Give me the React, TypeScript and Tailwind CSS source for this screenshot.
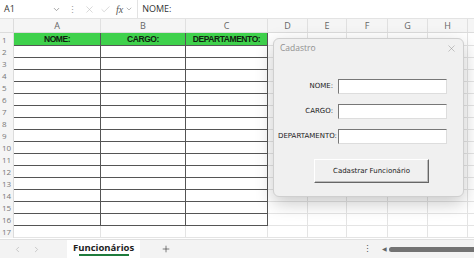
import { ChevronDown, X, Check, ChevronLeft, ChevronRight, Plus } from 'lucide-react';

const cols = [
  { label: 'A', w: 'w-[87px]' },
  { label: 'B', w: 'w-[85px]' },
  { label: 'C', w: 'w-[82px]' },
  { label: 'D', w: 'w-[40px]' },
  { label: 'E', w: 'w-[39px]' },
  { label: 'F', w: 'w-[41px]' },
  { label: 'G', w: 'w-[40px]' },
  { label: 'H', w: 'w-[40px]' },
];

const headers = ['NOME:', 'CARGO:', 'DEPARTAMENTO:'];
const rows = Array.from({ length: 17 }, (_, i) => i + 1);

function Field({ label }: { label: string }) {
  return (
    <div className="flex items-center h-[15px]">
      <span className="w-[60px] text-right pr-[5px] text-[7px] text-[#222]">{label}</span>
      <div className="w-[109px] h-[15px] bg-white border-t-[1.5px] border-l-[1.5px] border-t-[#777] border-l-[#777] border-b border-r border-b-[#ddd] border-r-[#ddd]" />
    </div>
  );
}

export default function App() {
  return (
    <div className="w-[474px] h-[258px] overflow-hidden bg-white relative font-['Open_Sans',sans-serif] text-[#333]">
      {/* Formula bar */}
      <div className="h-[19px] flex items-center border-b border-[#e3e3e3] text-[9px]">
        <div className="w-[64px] h-full flex items-center justify-between pl-[4px] pr-[3px]">
          <span>A1</span>
          <ChevronDown size={9} className="text-[#888]" />
        </div>
        <span className="ml-[4px] w-[8px] text-[#999] text-[9px] leading-none">⋮</span>
        <div className="flex items-center gap-[5px] text-[#bbb] ml-[8px]">
          <X size={11} strokeWidth={1.2} />
          <Check size={11} strokeWidth={1.2} />
        </div>
        <span className="ml-[5px] font-['Liberation_Serif',serif] italic text-[10px] text-[#555]">fx</span>
        <ChevronDown size={8} className="text-[#999] ml-[2px]" />
        <div className="h-full border-l border-[#e3e3e3] ml-[4px] pl-[4px] flex items-center text-[9px]">NOME:</div>
      </div>

      {/* Column headers */}
      <div className="flex h-[14px] bg-[#f5f5f5] border-b border-[#dcdcdc] text-[9px] text-[#666]">
        <div className="w-[14px] border-r border-[#dcdcdc]" />
        {cols.map((c) => (
          <div key={c.label} className={`${c.w} shrink-0 flex items-center justify-center border-r border-[#e0e0e0]`}>
            {c.label}
          </div>
        ))}
        <div className="flex-1" />
      </div>

      {/* Grid */}
      <div className="flex flex-col">
        {rows.map((r) => (
          <div key={r} className={`flex ${r === 1 ? 'h-[13px]' : 'h-[12px]'}`}>
            <div className="w-[14px] shrink-0 bg-[#f5f5f5] border-r border-[#dcdcdc] text-[8px] text-[#777] flex items-center pl-[2px] leading-none">
              {r}
            </div>
            {cols.map((c, ci) => {
              const inTable = ci < 3 && r <= 16;
              if (inTable) {
                return (
                  <div
                    key={c.label}
                    className={`${c.w} shrink-0 border-r border-b border-[#555] ${r === 1 ? 'bg-[#3fd14c]' : ''} flex items-center justify-center`}
                  >
                    {r === 1 && (
                      <span className="font-['Liberation_Sans',sans-serif] font-bold text-[8.5px] tracking-[-0.45px] text-[#10210f] leading-none">
                        {headers[ci]}
                      </span>
                    )}
                  </div>
                );
              }
              return <div key={c.label} className={`${c.w} shrink-0 border-r border-b border-[#e4e4e4]`} />;
            })}
            <div className="flex-1 border-b border-[#e4e4e4]" />
          </div>
        ))}
      </div>

      {/* Sheet tabs */}
      <div className="absolute left-0 right-0 bottom-0 h-[19px] bg-[#f3f3f3] border-t border-[#e0e0e0] flex items-center text-[#bbb]">
        <ChevronLeft size={9} className="ml-[13px]" />
        <ChevronRight size={9} className="ml-[10px]" />
        <div className="ml-[26px] h-full bg-white px-[6px] flex flex-col items-center justify-center">
          <span className="text-[9.5px] font-bold text-[#222] leading-none">Funcionários</span>
          <div className="mt-[2px] h-[1.5px] w-[50px] bg-[#1e7b3c]" />
        </div>
        <Plus size={10} className="ml-[21px] text-[#333]" strokeWidth={1.5} />
        <span className="ml-[192px] text-[#555] text-[9px]">⋮</span>
        <span className="ml-[10px] text-[#666] text-[6px]">◀</span>
        <div className="ml-[2px] flex-1 h-[5px] rounded-l-full bg-[#737373]" />
      </div>

      {/* Dialog */}
      <div className="absolute left-[273px] top-[38px] w-[191px] h-[159px] bg-[#f0f0f0] border border-[#cfcfcf] rounded-[6px] shadow-[0_6px_18px_rgba(0,0,0,0.22)] flex flex-col">
        <div className="h-[19px] flex items-center justify-between px-[6px] text-[8.5px] text-[#8f8f8f]">
          <span>Cadastro</span>
          <X size={11} strokeWidth={1} className="text-[#888]" />
        </div>
        <div className="flex flex-col gap-[10px] pl-[4px] mt-[21px] font-['DejaVu_Sans',sans-serif]">
          <Field label="NOME:" />
          <Field label="CARGO:" />
          <Field label="DEPARTAMENTO:" />
        </div>
        <div className="mt-[15px] ml-[40px] w-[115px] h-[24px] flex items-center justify-center bg-[#f0f0f0] border-t border-l border-t-white border-l-white border-b-[1.5px] border-r-[1.5px] border-b-[#666] border-r-[#666] shadow-[inset_-1px_-1px_0_#bbb] text-[7px] text-[#222] font-['DejaVu_Sans',sans-serif]">
          Cadastrar Funcionário
        </div>
      </div>
    </div>
  );
}
